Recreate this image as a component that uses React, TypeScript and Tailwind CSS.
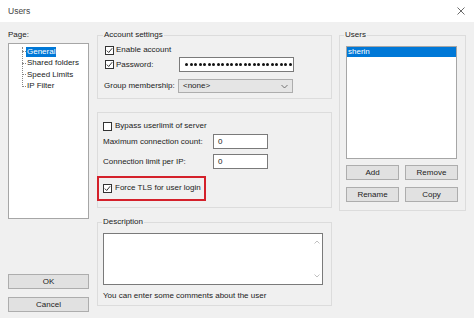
import React from "react";

const Check = ({ checked }: { checked: boolean }) => (
  <span className="w-[9px] h-[9px] border border-[#333333] bg-white flex items-center justify-center shrink-0">
    {checked && (
      <svg width="7" height="7" viewBox="0 0 7 7">
        <path d="M0.8 3.6 L2.7 5.5 L6.2 1.2" fill="none" stroke="#222" strokeWidth="0.9" />
      </svg>
    )}
  </span>
);

const Btn = ({ label, cls = "" }: { label: string; cls?: string }) => (
  <div className={"h-[15px] bg-[#e1e1e1] border border-[#adadad] flex items-center justify-center text-[8px] leading-[10px] text-[#222] " + cls}>
    {label}
  </div>
);

export default function App() {
  const dots = Array.from({ length: 24 });
  return (
    <div className="w-[474px] h-[321px] bg-white relative text-[#222] text-[8px] leading-[10px] overflow-hidden" style={{ fontFamily: '"Liberation Sans", Arial, sans-serif' }}>
      {/* Title bar */}
      <div className="h-[22px] flex items-center justify-between pl-[8px] pr-[9px]">
        <span className="text-[8.5px] text-[#444]">Users</span>
        <svg width="8" height="8" viewBox="0 0 8 8">
          <path d="M0.5 0.5 L7.5 7.5 M7.5 0.5 L0.5 7.5" stroke="#444" strokeWidth="0.8" />
        </svg>
      </div>
      {/* Body */}
      <div className="h-[296px] bg-[#f0f0f0] flex flex-row pt-[8px] pb-[6px] px-[8px]">
        {/* Left column */}
        <div className="w-[81px] flex flex-col">
          <div className="h-[10px] mb-[3px]">Page:</div>
          <div className="h-[176px] bg-white border border-[#a6a6a6] relative">
            <div className="absolute left-[13px] top-[3px] h-[38px] border-l border-dotted border-[#888]" />
            <div className="flex flex-col pt-[2px]">
              {["General", "Shared folders", "Speed Limits", "IP Filter"].map((t, i) => (
                <div key={t} className="h-[11.5px] flex items-center">
                  <div className="ml-[13px] w-[4px] border-t border-dotted border-[#888]" />
                  <span className={"px-[1px] h-[10px] flex items-center " + (i === 0 ? "bg-[#0078d7] text-white" : "")}>{t}</span>
                </div>
              ))}
            </div>
          </div>
          <div className="mt-auto flex flex-col gap-[8px]">
            <Btn label="OK" cls="border-[#0078d7]" />
            <Btn label="Cancel" />
          </div>
        </div>

        {/* Middle column */}
        <div className="w-[235px] ml-[8px] flex flex-col">
          <fieldset className="h-[69px] border border-[#dcdcdc]">
            <legend className="ml-[5px] px-[1px] leading-[10px]">Account settings</legend>
            <div className="pl-[7px]">
              <div className="mt-[5px] h-[10px] flex items-center gap-[2px]">
                <Check checked />
                <span>Enable account</span>
              </div>
              <div className="mt-[2px] h-[15px] flex items-center">
                <div className="w-[74px] flex items-center gap-[2px]">
                  <Check checked />
                  <span>Password:</span>
                </div>
                <div className="w-[115px] h-[15px] bg-white border border-[#7a7a7a] flex items-center pl-[5px] gap-[1.5px]">
                  {dots.map((_, i) => (
                    <span key={i} className="w-[3px] h-[3px] rounded-full bg-[#111]" />
                  ))}
                </div>
              </div>
              <div className="mt-[7px] h-[14px] flex items-center">
                <div className="w-[74px] -ml-[1px] pr-[1px]">Group membership:</div>
                <div className="w-[115px] h-[14px] bg-[#e5e5e5] border border-[#adadad] flex items-center justify-between pl-[4px] pr-[4px]">
                  <span>&lt;none&gt;</span>
                  <svg width="7" height="5" viewBox="0 0 7 5">
                    <path d="M0.5 1 L3.5 4 L6.5 1" fill="none" stroke="#555" strokeWidth="0.8" />
                  </svg>
                </div>
              </div>
            </div>
          </fieldset>

          <div className="mt-[13px] h-[96px] border border-[#dcdcdc] pl-[5px] relative">
            <div className="mt-[8px] h-[10px] flex items-center gap-[3px]">
              <Check checked={false} />
              <span>Bypass userlimit of server</span>
            </div>
            <div className="mt-[3px] h-[15px] flex items-center">
              <div className="w-[110px]">Maximum connection count:</div>
              <div className="w-[55px] h-[15px] bg-white border border-[#7a7a7a] flex items-center pl-[4px]">0</div>
            </div>
            <div className="mt-[5px] h-[15px] flex items-center">
              <div className="w-[110px]">Connection limit per IP:</div>
              <div className="w-[55px] h-[15px] bg-white border border-[#7a7a7a] flex items-center pl-[4px]">0</div>
            </div>
            <div className="mt-[14px] h-[10px] flex items-center gap-[3px]">
              <Check checked />
              <span>Force TLS for user login</span>
            </div>
            <div className="absolute left-[-1px] top-[63px] w-[109px] h-[25px] border-2 border-[#d4202a]" />
          </div>

          <fieldset className="mt-[9px] h-[89px] border border-[#dcdcdc]">
            <legend className="ml-[4px] px-[1px] leading-[10px]">Description</legend>
            <div className="pl-[5px]">
              <div className="mt-[6px] w-[220px] h-[52px] bg-white border border-[#7a7a7a] flex justify-end">
                <div className="w-[11px] flex flex-col items-center justify-between py-[6px]">
                  <svg width="6" height="4" viewBox="0 0 6 4">
                    <path d="M0.5 3.5 L3 1 L5.5 3.5" fill="none" stroke="#b0b0b0" strokeWidth="0.8" />
                  </svg>
                  <svg width="6" height="4" viewBox="0 0 6 4">
                    <path d="M0.5 0.5 L3 3 L5.5 0.5" fill="none" stroke="#b0b0b0" strokeWidth="0.8" />
                  </svg>
                </div>
              </div>
              <div className="mt-[6px] h-[10px]">You can enter some comments about the user</div>
            </div>
          </fieldset>
        </div>

        {/* Right column */}
        <div className="w-[127px] ml-[7px] flex flex-col">
          <fieldset className="h-[181px] border border-[#dcdcdc]">
            <legend className="ml-[4px] px-[1px] leading-[10px]">Users</legend>
            <div className="pl-[6px]">
              <div className="mt-[6px] w-[111px] h-[113px] bg-white border border-[#a6a6a6]">
                <div className="h-[10px] bg-[#0078d7] text-white flex items-center pl-[1px]">sherin</div>
              </div>
              <div className="mt-[6px] flex gap-[6px]">
                <Btn label="Add" cls="w-[53px]" />
                <Btn label="Remove" cls="w-[53px]" />
              </div>
              <div className="mt-[7px] flex gap-[6px]">
                <Btn label="Rename" cls="w-[53px]" />
                <Btn label="Copy" cls="w-[53px]" />
              </div>
            </div>
          </fieldset>
        </div>
      </div>
    </div>
  );
}
